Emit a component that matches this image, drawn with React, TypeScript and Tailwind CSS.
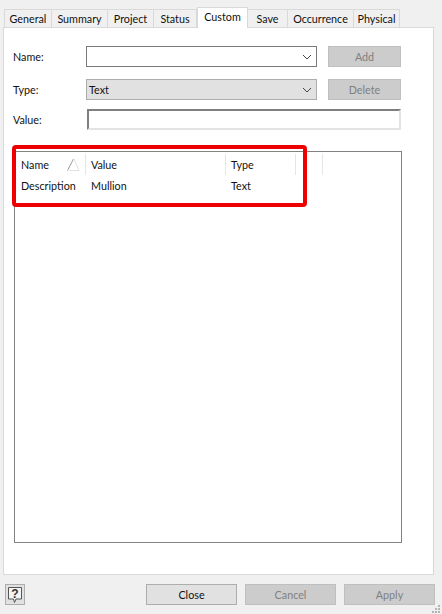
import React from "react";

const tabs: [string, string][] = [
  ["General", "w-[48px]"],
  ["Summary", "w-[56px]"],
  ["Project", "w-[46px]"],
  ["Status", "w-[43px]"],
  ["Custom", "w-[51px]"],
  ["Save", "w-[40px]"],
  ["Occurrence", "w-[66px]"],
  ["Physical", "w-[46px]"],
];

function Chevron() {
  return (
    <svg width="10" height="6" viewBox="0 0 10 6" className="mr-[4px] shrink-0">
      <path d="M1 1l4 4 4-4" fill="none" stroke="#444" strokeWidth="1" />
    </svg>
  );
}

function DisabledButton({ label, w }: { label: string; w: string }) {
  return (
    <div className={`${w} h-[21px] bg-[#cccccc] border border-[#bfbfbf] flex items-center justify-center text-[#808080]`}>
      {label}
    </div>
  );
}

export default function App() {
  return (
    <div className="relative w-[442px] h-[614px] overflow-hidden bg-[#f0f0f0] text-[10.75px] leading-[16px] text-[#111111] font-['Lato',sans-serif] flex flex-col">
      <div className="flex items-end h-[28px] pl-[4px] relative z-10">
        {tabs.map(([t, w]) =>
          t === "Custom" ? (
            <div key={t} className={`${w} h-[21px] bg-white border border-b-0 border-[#d9d9d9] flex items-center justify-center pb-[2px]`}>
              {t}
            </div>
          ) : (
            <div key={t} className={`${w} h-[19px] bg-[#f0f0f0] border border-[#d9d9d9] border-l-0 first:border-l flex items-center justify-center`}>
              {t}
            </div>
          )
        )}
      </div>

      <div className="ml-[3px] w-[431px] h-[548px] -mt-px bg-white border border-[#d9d9d9] pt-[18px] pl-[9px]">
        <div className="flex items-center h-[21px]">
          <span className="w-[73px]">Name:</span>
          <div className="w-[231px] h-[21px] bg-white border border-[#7a7a7a] flex items-center justify-end">
            <Chevron />
          </div>
          <div className="ml-[11px]"><DisabledButton label="Add" w="w-[73px]" /></div>
        </div>
        <div className="flex items-center h-[21px] mt-[12px]">
          <span className="w-[73px]">Type:</span>
          <div className="w-[231px] h-[21px] bg-[#e1e1e1] border border-[#adadad] flex items-center justify-between pl-[2px]">
            <span>Text</span>
            <Chevron />
          </div>
          <div className="ml-[11px]"><DisabledButton label="Delete" w="w-[73px]" /></div>
        </div>
        <div className="flex items-center h-[21px] mt-[9px]">
          <span className="w-[74px]">Value:</span>
          <div className="w-[314px] h-[21px] bg-white border-2 border-[#e3e3e3] border-t-[#7f7f7f] border-l-[#7f7f7f]" />
        </div>

        <div className="ml-px mt-[21px] w-[388px] h-[392px] bg-white border border-[#828282]">
          <div className="flex h-[25px] pt-[2px]">
            <div className="w-[71px] h-[21px] border-r border-[#e5e5e5] pl-[6px] flex items-center justify-between pr-[5px]">
              <span>Name</span>
              <svg width="14" height="14" viewBox="0 0 14 14">
                <path d="M7.5 1L1.5 12.5" stroke="#9a9a9a" fill="none" />
                <path d="M8 1L13 12.5H3" stroke="#e2e2e2" fill="none" />
              </svg>
            </div>
            <div className="w-[140px] h-[21px] border-r border-[#e5e5e5] pl-[5px] flex items-center">Value</div>
            <div className="w-[70px] h-[21px] border-r border-[#e5e5e5] pl-[5px] flex items-center">Type</div>
            <div className="w-[27px] h-[21px] border-r border-[#e5e5e5]" />
          </div>
          <div className="flex h-[18px] items-center">
            <span className="w-[71px] pl-[6px] whitespace-nowrap">Description</span>
            <span className="w-[140px] pl-[5px]">Mullion</span>
            <span className="w-[70px] pl-[5px]">Text</span>
          </div>
        </div>
      </div>

      <div className="flex items-start pt-[9px] pl-[5px]">
        <div className="w-[20px] h-[21px] bg-[#e1e1e1] border border-[#adadad] flex items-center justify-center">
          <svg width="16" height="18" viewBox="0 0 16 18">
            <path d="M1.5 1.5h13v11.5H9l-1.5 3.5-1-3.5h-5z" fill="#f4f4f4" stroke="#555" />
            <text x="8" y="11.5" textAnchor="middle" fontSize="12" fontWeight="700" fill="#333" fontFamily="Liberation Sans, sans-serif">?</text>
          </svg>
        </div>
        <div className="ml-[121px] w-[91px] h-[21px] bg-[#e1e1e1] border border-[#adadad] flex items-center justify-center">Close</div>
        <div className="ml-[8px]"><DisabledButton label="Cancel" w="w-[91px]" /></div>
        <div className="ml-[8px]"><DisabledButton label="Apply" w="w-[91px]" /></div>
      </div>

      <svg width="12" height="10" viewBox="0 0 12 10" className="absolute right-0 bottom-0">
        <g fill="#b5b5b5">
          <rect x="8" y="1" width="2" height="2" />
          <rect x="5" y="4" width="2" height="2" />
          <rect x="8" y="4" width="2" height="2" />
          <rect x="2" y="7" width="2" height="2" />
          <rect x="5" y="7" width="2" height="2" />
          <rect x="8" y="7" width="2" height="2" />
        </g>
      </svg>

      <div className="absolute left-[12px] top-[145px] w-[295px] h-[62px] border-[4px] border-[#ee0000] rounded-[4px] pointer-events-none" />
    </div>
  );
}
